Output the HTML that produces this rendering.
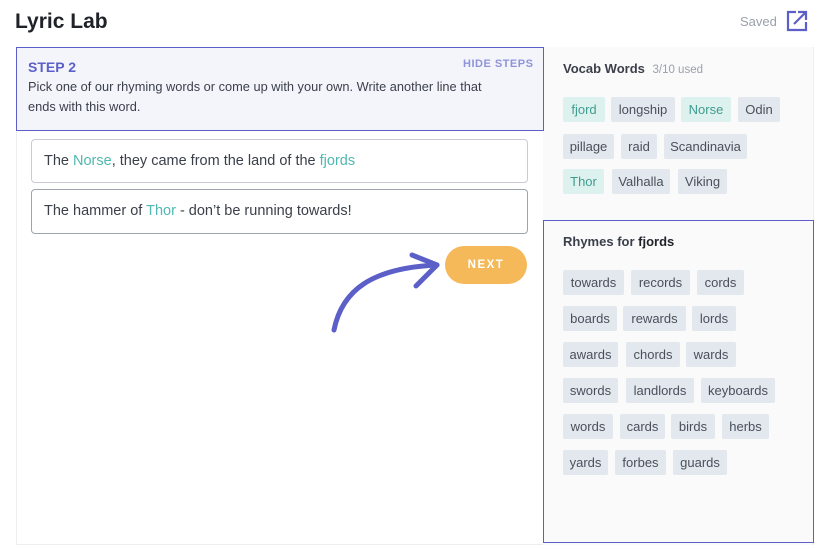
<!DOCTYPE html>
<html><head><meta charset="utf-8"><style>
*{box-sizing:border-box;margin:0;padding:0}
body{width:834px;height:549px;background:#fff;font-family:"Liberation Sans",sans-serif;position:relative;overflow:hidden;color:#3a3f4a}
.a{position:absolute}
.tag{position:absolute;height:25px;line-height:25px;font-size:13px;color:#4a4f5a;background:#e3e8ef;border-radius:2px;text-align:center}
.g{background:#ddf2ee;color:#3f9c8f}
.inp{position:absolute;left:31px;width:497px;border:1px solid #c9ccd4;border-radius:4px;font-size:14.5px;padding-left:12px;color:#3a3f4a;background:#fff}
.t{color:#4fb8b0}
</style></head><body>
<div class="a" style="left:15px;top:10px;font-size:21px;font-weight:bold;color:#1f2228">Lyric Lab</div>
<div class="a" style="left:740px;top:14px;font-size:13px;color:#9aa0aa">Saved</div>
<svg class="a" style="left:786px;top:10px" width="22" height="22" viewBox="0 0 22 22"><path d="M10 2H2v18h18v-8" fill="none" stroke="#5b5fc7" stroke-width="2.2"/><path d="M8 14L19 3M12 2h8v8" fill="none" stroke="#5b5fc7" stroke-width="2.2"/></svg>
<div class="a" style="left:16px;top:47px;width:528px;height:498px;border:1px solid #eceef2;border-top:none"></div>
<div class="a" style="left:543px;top:47px;width:271px;height:498px;background:#fafafb;border-right:1px solid #eceef2"></div>
<div class="a" style="left:16px;top:47px;width:528px;height:84px;background:#f4f5fb;border:1px solid #5b5fc7"></div>
<div class="a" style="left:28px;top:59px;font-size:14px;font-weight:bold;color:#5b5fc7">STEP 2</div>
<div class="a" style="left:463px;top:58px;font-size:11px;font-weight:bold;color:#8f93d8;letter-spacing:.5px">HIDE STEPS</div>
<div class="a" style="left:28px;top:77px;width:480px;font-size:12.8px;line-height:20px;color:#3a3f4a">Pick one of our rhyming words or come up with your own. Write another line that ends with this word.</div>
<div class="inp" style="top:139px;height:44px;line-height:42px">The <span class="t">Norse</span>, they came from the land of the <span class="t">fjords</span></div>
<div class="inp" style="top:189px;height:45px;line-height:43px;border-color:#9ea3ad">The hammer of <span class="t">Thor</span> - don’t be running towards!</div>
<div class="a" style="left:445px;top:246px;width:82px;height:38px;border-radius:19px;background:#f6b95a;color:#fff;font-size:11.5px;font-weight:bold;letter-spacing:1.5px;text-align:center;line-height:38px">NEXT</div>
<svg class="a" style="left:0;top:0" width="834" height="549"><path d="M334 330C342 290 372 268 437 265" fill="none" stroke="#5b5fc7" stroke-width="5" stroke-linecap="round"/><path d="M412 255L437 265L416 286" fill="none" stroke="#5b5fc7" stroke-width="5" stroke-linecap="round" stroke-linejoin="round"/></svg>
<div class="a" style="left:563px;top:61px;font-size:13px;font-weight:bold;color:#3a3f4a">Vocab Words <span style="font-weight:normal;font-size:11.5px;color:#9aa0aa;margin-left:4px">3/10 used</span></div>
<div class="tag g" style="left:563px;top:97px;width:42px">fjord</div>
<div class="tag" style="left:611px;top:97px;width:64px">longship</div>
<div class="tag g" style="left:681px;top:97px;width:50px">Norse</div>
<div class="tag" style="left:738px;top:97px;width:42px">Odin</div>
<div class="tag" style="left:563px;top:134px;width:51px">pillage</div>
<div class="tag" style="left:621px;top:134px;width:36px">raid</div>
<div class="tag" style="left:664px;top:134px;width:83px">Scandinavia</div>
<div class="tag g" style="left:563px;top:169px;width:41px">Thor</div>
<div class="tag" style="left:612px;top:169px;width:58px">Valhalla</div>
<div class="tag" style="left:678px;top:169px;width:49px">Viking</div>
<div class="a" style="left:543px;top:220px;width:271px;height:323px;border:1px solid #5b5fc7;background:#fafafb"></div>
<div class="a" style="left:563px;top:234px;font-size:13px;font-weight:bold;color:#3a3f4a">Rhymes for <span style="color:#1f2228">fjords</span></div>
<div class="tag" style="left:563px;top:270px;width:61px">towards</div>
<div class="tag" style="left:631px;top:270px;width:59px">records</div>
<div class="tag" style="left:697px;top:270px;width:47px">cords</div>
<div class="tag" style="left:563px;top:306px;width:54px">boards</div>
<div class="tag" style="left:623px;top:306px;width:63px">rewards</div>
<div class="tag" style="left:692px;top:306px;width:44px">lords</div>
<div class="tag" style="left:563px;top:342px;width:55px">awards</div>
<div class="tag" style="left:626px;top:342px;width:54px">chords</div>
<div class="tag" style="left:686px;top:342px;width:50px">wards</div>
<div class="tag" style="left:563px;top:378px;width:55px">swords</div>
<div class="tag" style="left:626px;top:378px;width:68px">landlords</div>
<div class="tag" style="left:701px;top:378px;width:74px">keyboards</div>
<div class="tag" style="left:563px;top:414px;width:50px">words</div>
<div class="tag" style="left:620px;top:414px;width:45px">cards</div>
<div class="tag" style="left:671px;top:414px;width:44px">birds</div>
<div class="tag" style="left:722px;top:414px;width:47px">herbs</div>
<div class="tag" style="left:563px;top:450px;width:45px">yards</div>
<div class="tag" style="left:615px;top:450px;width:51px">forbes</div>
<div class="tag" style="left:673px;top:450px;width:54px">guards</div>
</body></html>
